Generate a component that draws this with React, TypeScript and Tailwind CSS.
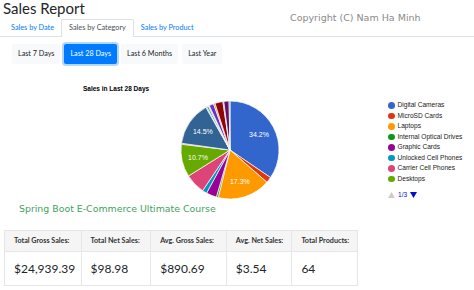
import React from 'react';

// pie slices in Google Charts default colour order
const slices: { v: number; c: string; label?: string }[] = [
  { v: 34.2, c: '#3366cc', label: '34.2%' },
  { v: 1.9, c: '#dc3912' },
  { v: 17.3, c: '#ff9900', label: '17.3%' },
  { v: 0.6, c: '#109618' },
  { v: 3.4, c: '#990099' },
  { v: 1.5, c: '#0099c6' },
  { v: 6.6, c: '#dd4477' },
  { v: 10.7, c: '#66aa00', label: '10.7%' },
  { v: 0.3, c: '#b82e2e' },
  { v: 14.5, c: '#316395', label: '14.5%' },
  { v: 0.3, c: '#994499' },
  { v: 0.6, c: '#22aa99' },
  { v: 0.3, c: '#aaaa11' },
  { v: 1.5, c: '#6633cc' },
  { v: 0.5, c: '#e67300' },
  { v: 2.6, c: '#8b0707' },
  { v: 0.3, c: '#b91383' },
  { v: 1.7, c: '#651067' },
  { v: 0.3, c: '#329262' },
];

const legend = [
  { name: 'Digital Cameras', c: '#3366cc' },
  { name: 'MicroSD Cards', c: '#dc3912' },
  { name: 'Laptops', c: '#ff9900' },
  { name: 'Internal Optical Drives', c: '#109618' },
  { name: 'Graphic Cards', c: '#990099' },
  { name: 'Unlocked Cell Phones', c: '#0099c6' },
  { name: 'Carrier Cell Phones', c: '#dd4477' },
  { name: 'Desktops', c: '#66aa00' },
];

const stats = [
  { label: 'Total Gross Sales:', value: '$24,939.39', w: 'w-[76px]' },
  { label: 'Total Net Sales:', value: '$98.98', w: 'w-[70px]' },
  { label: 'Avg. Gross Sales:', value: '$890.69', w: 'w-[76px]' },
  { label: 'Avg. Net Sales:', value: '$3.54', w: 'w-[66px]' },
  { label: 'Total Products:', value: '64', w: 'w-[66px]' },
];

const PieChart = () => {
  const cx = 230;
  const cy = 86;
  const r = 49;
  const total = slices.reduce((s, x) => s + x.v, 0);
  const pt = (t: number, rad: number) => {
    const a = t * Math.PI * 2;
    return [cx + rad * Math.sin(a), cy - rad * Math.cos(a)];
  };
  let acc = 0;
  const parts = slices.map((s, i) => {
    const t0 = acc / total;
    acc += s.v;
    const t1 = acc / total;
    const [x0, y0] = pt(t0, r);
    const [x1, y1] = pt(t1, r);
    const large = t1 - t0 > 0.5 ? 1 : 0;
    const d = `M${cx},${cy} L${x0},${y0} A${r},${r} 0 ${large} 1 ${x1},${y1} Z`;
    const [lx, ly] = pt((t0 + t1) / 2, r * 0.67);
    return { d, c: s.c, label: s.label, lx, ly, key: i };
  });

  return (
    <svg width="384" height="166" className="block shrink-0">
      <text x="83" y="27" fontFamily="'Liberation Sans', Arial, sans-serif" fontSize="6.5" fontWeight="bold" fill="#000">
        Sales in Last 28 Days
      </text>
      {parts.map((p) => (
        <path key={p.key} d={p.d} fill={p.c} stroke="#fff" strokeWidth="0.7" />
      ))}
      {parts
        .filter((p) => p.label)
        .map((p) => (
          <text
            key={`l${p.key}`}
            x={p.lx}
            y={p.ly + 2.4}
            textAnchor="middle"
            fontFamily="'Liberation Sans', Arial, sans-serif"
            fontSize="7"
            fill="#fff"
          >
            {p.label}
          </text>
        ))}
    </svg>
  );
};

export default function App() {
  return (
    <div className="relative w-[474px] h-[290px] overflow-hidden bg-white text-[#212529] font-['Lato',sans-serif]">
      {/* heading */}
      <h2 className="h-[19px] pl-[3px] text-[15px] leading-[17px] font-normal">Sales Report</h2>

      {/* tabs */}
      <ul className="flex h-[18px] border-b border-[#dee2e6] pl-[4px] text-[7.3px]">
        <li>
          <a className="block h-[18px] px-[7px] leading-[17px] text-[#007bff]">Sales by Date</a>
        </li>
        <li>
          <a className="block h-[18px] px-[7px] leading-[16px] rounded-t-[2px] border border-b-0 border-[#dee2e6] bg-white text-[#495057]">
            Sales by Category
          </a>
        </li>
        <li>
          <a className="block h-[18px] px-[7px] leading-[17px] text-[#007bff]">Sales by Product</a>
        </li>
      </ul>

      {/* period buttons */}
      <div className="flex gap-[4px] pl-[12px] pt-[7px] text-[7.2px]">
        <button className="h-[20px] px-[6px] rounded-[2px] bg-[#f8f9fa] text-[#212529]">Last 7 Days</button>
        <button className="h-[20px] px-[6px] rounded-[2px] bg-[#007bff] text-white ring-2 ring-[#80bdff]/60">Last 28 Days</button>
        <button className="h-[20px] px-[6px] rounded-[2px] bg-[#f8f9fa] text-[#212529]">Last 6 Months</button>
        <button className="h-[20px] px-[6px] rounded-[2px] bg-[#f8f9fa] text-[#212529]">Last Year</button>
      </div>

      {/* chart + legend */}
      <div className="flex h-[166px]">
        <PieChart />
        <div className="pl-[4px] pt-[36px] font-['Liberation_Sans',Arial,sans-serif] text-[6.6px] text-[#222]">
          {legend.map((l) => (
            <div key={l.name} className="flex h-[10.5px] items-center gap-[3px]">
              <span className="h-[6.5px] w-[6.5px] rounded-full" style={{ backgroundColor: l.c }} />
              <span>{l.name}</span>
            </div>
          ))}
          <div className="mt-[6px] flex items-center gap-[3px]">
            <svg width="7" height="6" viewBox="0 0 7 6">
              <path d="M3.5 0 L7 6 L0 6 Z" fill="#cccccc" />
            </svg>
            <span className="text-[#0011cc]">1/3</span>
            <svg width="7" height="6" viewBox="0 0 7 6">
              <path d="M0 0 L7 0 L3.5 6 Z" fill="#0011cc" />
            </svg>
          </div>
        </div>
      </div>

      {/* summary table */}
      <div className="ml-[4px] flex w-[354px] border border-[#e6e6e6]">
        {stats.map((s, i) => (
          <div key={s.label} className={`${s.w} ${i > 0 ? 'border-l border-[#e6e6e6]' : ''}`}>
            <div className="flex h-[21px] items-center bg-[#f5f5f5] border-b border-[#e6e6e6] pl-[9px] text-[7.2px] font-bold text-[#333]">
              {s.label}
            </div>
            <div className="flex h-[33px] items-center pl-[9px] text-[12px] text-[#212529]">{s.value}</div>
          </div>
        ))}
      </div>

      {/* video overlays */}
      <div className="absolute left-[290px] top-[11px] font-['DejaVu_Sans',Verdana,sans-serif] text-[9.5px] text-[#8a8a8a]">
        Copyright (C) Nam Ha Minh
      </div>
      <div className="absolute left-[19px] top-[202px] font-['DejaVu_Sans',Verdana,sans-serif] text-[9.4px] text-[#3fa35e]">
        Spring Boot E-Commerce Ultimate Course
      </div>
    </div>
  );
}
